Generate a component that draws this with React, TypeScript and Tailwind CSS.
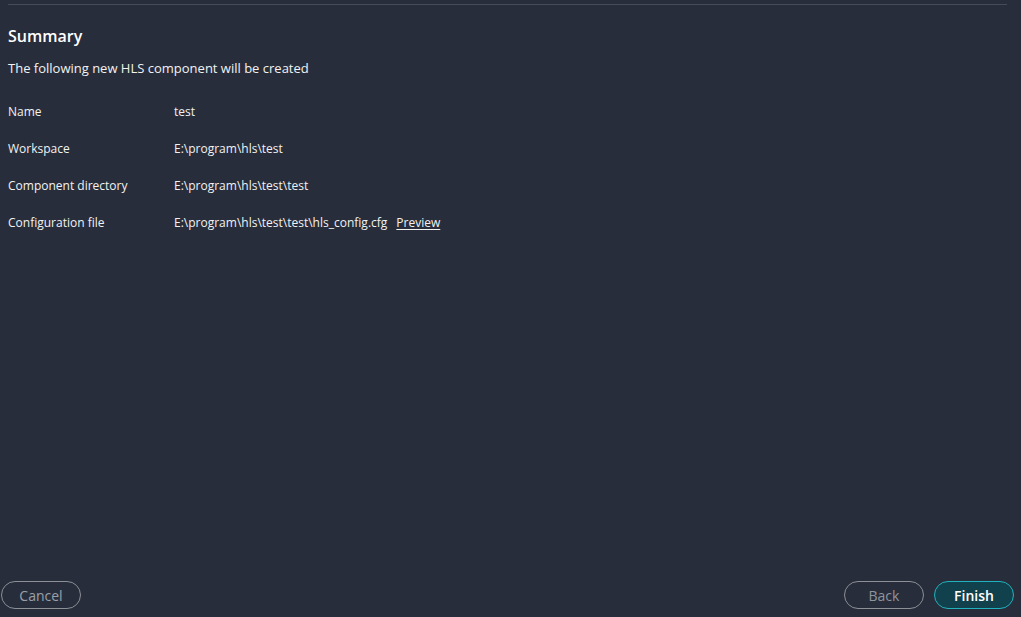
const rows = [
  { label: "Name", value: "test" },
  { label: "Workspace", value: "E:\\program\\hls\\test" },
  { label: "Component directory", value: "E:\\program\\hls\\test\\test" },
  { label: "Configuration file", value: "E:\\program\\hls\\test\\test\\hls_config.cfg", preview: true },
];

export default function App() {
  return (
    <div
      className="w-[1021px] h-[617px] bg-[#282d3b] text-[#f2f2f2] flex flex-col overflow-hidden"
      style={{ fontFamily: '"Open Sans", "Noto Sans", sans-serif' }}
    >
      <div className="pt-[4px] pl-[8px] pr-[14px]">
        <div className="h-px bg-[#454b59]" />
      </div>

      <div className="flex-1 px-[8px]">
        <h1 className="mt-[20px] text-[16px] font-semibold leading-[22px] text-white">Summary</h1>
        <p className="mt-[12px] text-[13px] leading-[18px]">The following new HLS component will be created</p>

        <div className="mt-[26px] flex flex-col gap-[19px]">
          {rows.map((r) => (
            <div key={r.label} className="flex items-center text-[12px] leading-[18px]">
              <div className="w-[166px]">{r.label}</div>
              <div className="flex items-center">
                <span>{r.value}</span>
                {r.preview && (
                  <span className="ml-[9px] underline underline-offset-2 cursor-pointer">Preview</span>
                )}
              </div>
            </div>
          ))}
        </div>
      </div>

      <div className="flex items-center justify-between pl-[1px] pr-[7px] pb-[8px]">
        <button className="w-[80px] h-[28px] rounded-full border border-[#8c8f96] text-[14px] text-[#9aa0aa]">
          Cancel
        </button>
        <div className="flex gap-[10px]">
          <button className="w-[80px] h-[28px] rounded-full border border-[#8c8f96] text-[14px] text-[#8f949c]">
            Back
          </button>
          <button className="w-[80px] h-[28px] rounded-full border border-[#20b2bd] bg-[#11414c] text-[14px] font-semibold text-white">
            Finish
          </button>
        </div>
      </div>
    </div>
  );
}
